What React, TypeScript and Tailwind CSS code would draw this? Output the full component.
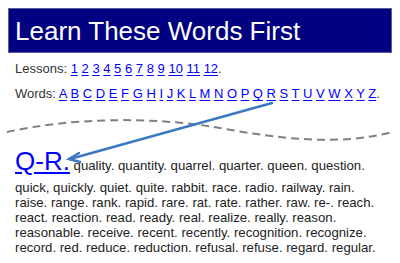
import React from "react";

const lessons = ["1", "2", "3", "4", "5", "6", "7", "8", "9", "10", "11", "12"];
const letters = "ABCDEFGHIJKLMNOPQRSTUVWXYZ".split("");

const wordLines = [
  "quick, quickly. quiet. quite. rabbit. race. radio. railway. rain.",
  "raise. range. rank. rapid. rare. rat. rate. rather. raw. re-. reach.",
  "react. reaction. read. ready. real. realize. really. reason.",
  "reasonable. receive. recent. recently. recognition. recognize.",
  "record. red. reduce. reduction. refusal. refuse. regard. regular.",
];

function LinkRow({ label, items }: { label: string; items: string[] }) {
  return (
    <p className="text-[13px] leading-[15px] text-[#333]">
      {label}:{" "}
      {items.map((it, i) => (
        <React.Fragment key={it}>
          <a href="#" className="text-[#0000ff] underline underline-offset-2">
            {it}
          </a>
          {i < items.length - 1 ? " " : "."}
        </React.Fragment>
      ))}
    </p>
  );
}

export default function App() {
  return (
    <div
      className="relative w-[400px] h-[263px] overflow-hidden bg-white"
      style={{ fontFamily: '"Liberation Sans", Arial, sans-serif' }}
    >
      <div className="mx-2 mt-2 h-[45px] bg-[#000080] border border-[#5b5ba3] flex items-center pl-[6px]">
        <h1 className="text-[26px] leading-none text-white">Learn These Words First</h1>
      </div>

      <div className="px-[15px] mt-[8px] flex flex-col gap-[10px]">
        <LinkRow label="Lessons" items={lessons} />
        <LinkRow label="Words" items={letters} />
      </div>

      {/* dashed wave */}
      <svg width="400" height="40" className="block mt-[7px]" viewBox="0 108 400 40">
        <path
          d="M7 132 C 70 118 150 116 220 128 C 280 139 340 146 392 132"
          fill="none"
          stroke="#808080"
          strokeWidth="2"
          strokeDasharray="8 5"
        />
      </svg>

      <div className="px-[15px] text-[13.2px] leading-[15px] text-[#222]">
        <p className="leading-[26px] mb-[1px]">
          <a href="#" className="text-[26px] leading-[26px] text-[#0000ff] underline underline-offset-2">
            Q-R.
          </a>{" "}
          quality. quantity. quarrel. quarter. queen. question.
        </p>
        {wordLines.map((l) => (
          <p key={l}>{l}</p>
        ))}
      </div>

      {/* arrow from the R link down to Q-R. */}
      <svg className="absolute left-0 top-0 pointer-events-none" width="400" height="263">
        <g stroke="#3a78c2" strokeWidth="2.5" fill="none" strokeLinecap="round">
          <line x1="272" y1="103" x2="70" y2="159" />
          <polyline points="79,153 69,159 80,162" />
        </g>
      </svg>
    </div>
  );
}
